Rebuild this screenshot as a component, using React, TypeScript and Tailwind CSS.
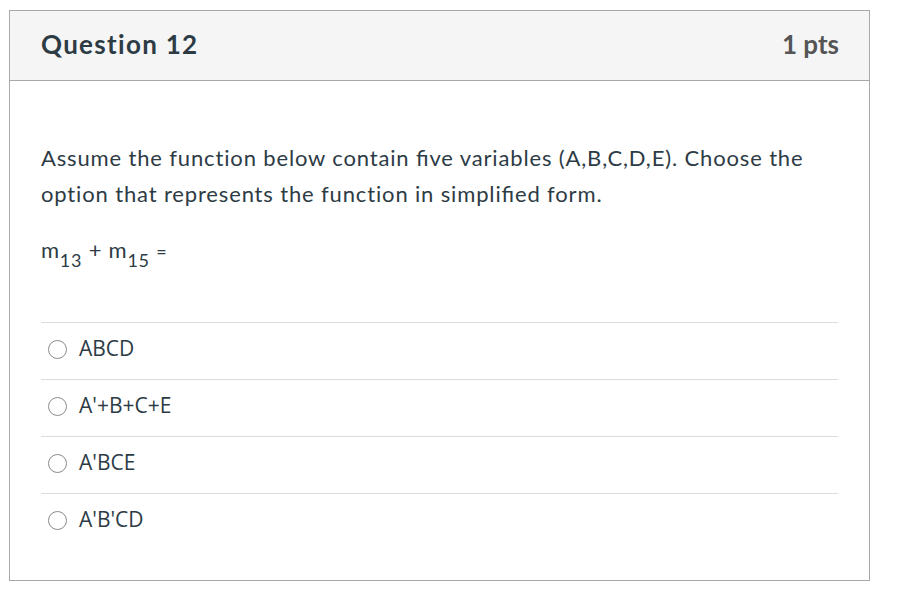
import React from "react";

const options = ["ABCD", "A'+B+C+E", "A'BCE", "A'B'CD"];

export default function App() {
  return (
    <div className="w-[897px] h-[598px] bg-white pt-[10px] pl-[9px]" style={{ fontFamily: "Lato, 'Open Sans', sans-serif" }}>
      <div className="w-[861px] h-[571px] border border-[#a8a8a8] flex flex-col">
        <div className="h-[70px] bg-[#f5f5f5] border-b border-[#a8a8a8] flex items-center justify-between pl-[31px] pr-[30px] pb-[3px] shrink-0">
          <div className="text-[26px] font-bold text-[#2d3b45] tracking-[1.3px]">Question 12</div>
          <div className="text-[26px] font-bold text-[#555555]">1 pts</div>
        </div>
        <div className="px-[31px] pt-[59px]">
          <p className="text-[22px] leading-[36px] text-[#2d3b45] m-0 tracking-[0.85px] pr-[20px]">
            Assume the function below contain ﬁve variables (A,B,C,D,E). Choose the option that represents the function in simpliﬁed form.
          </p>
          <p className="text-[22px] leading-[36px] text-[#2d3b45] mt-[20px] h-[36px] tracking-[0.75px]">
            m<sub className="text-[18px] align-[-4px] leading-none">13</sub> + m<sub className="text-[18px] align-[-4px] leading-none">15</sub> <span className="text-[18px]">=</span>
          </p>
          <div className="mt-[54px]">
            {options.map((o) => (
              <div key={o} className="border-t border-[#dcdcdc] h-[57px] flex items-start pl-[7px] pt-[16px]">
                <div className="w-[19px] h-[19px] rounded-full border-[1.5px] border-[#8a8a8a] shrink-0 mt-[1px]" />
                <span className="ml-[12px] text-[21px] leading-[19px] text-[#2d3b45]" style={{ fontFamily: "'Open Sans', sans-serif" }}>{o}</span>
              </div>
            ))}
          </div>
        </div>
      </div>
    </div>
  );
}
